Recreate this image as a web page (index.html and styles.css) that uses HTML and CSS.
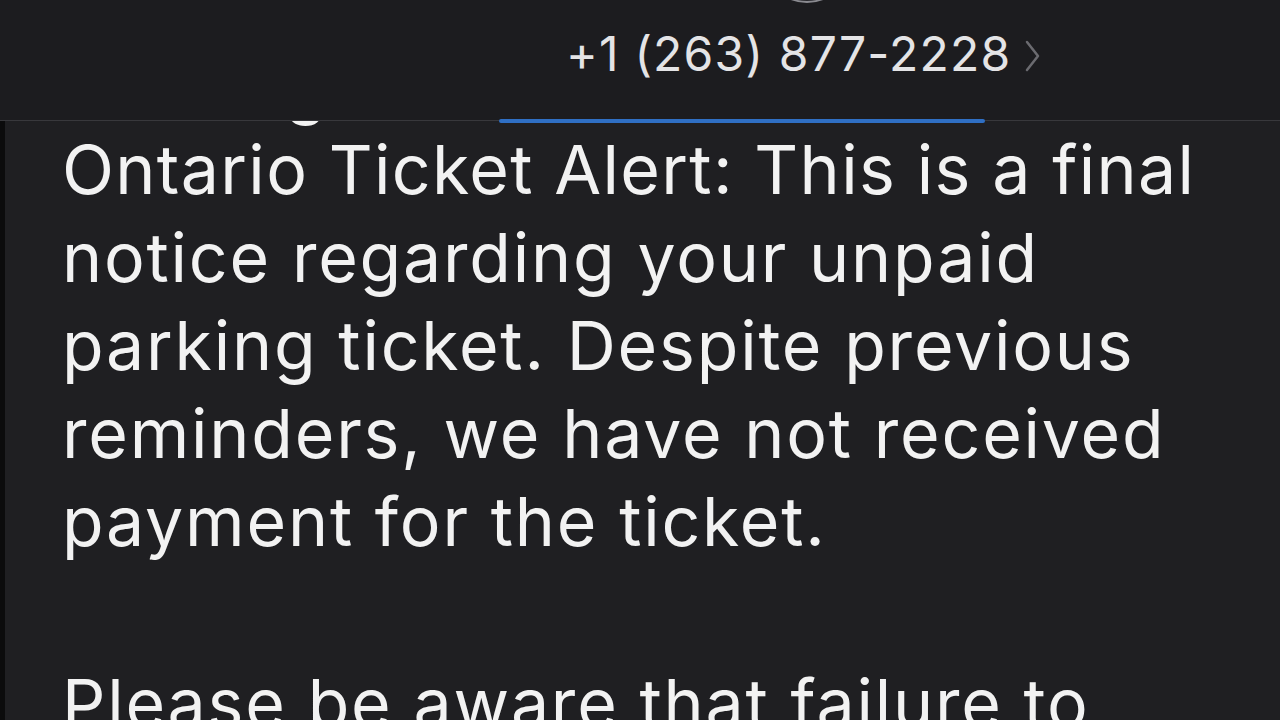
FILE: index.html
```html
<!DOCTYPE html>
<html lang="en">
<head>
    <meta charset="UTF-8">
    <title>Message</title>
    <link rel="stylesheet" href="styles.css">
</head>
<body>

    <!-- Conversation header -->
    <header class="header">
        <div class="avatar"></div>
        <div class="contact">
            <span class="number">+1 (263) 877-2228</span>
            <svg class="chevron" width="16" height="34" viewBox="0 0 16 34">
                <path d="M2 3 L13 17 L2 31" fill="none" stroke="#6b6b70" stroke-width="2.5" stroke-linecap="round" stroke-linejoin="round"/>
            </svg>
        </div>
        <div class="progress"></div>
    </header>

    <!-- Message body -->
    <main class="thread">
        <div class="cut-line">g</div>
        <p class="message"><span class="lead">Ontario Ticket Alert: This is a final</span> notice regarding your unpaid parking ticket. Despite previous reminders, we have not received payment for the ticket.</p>
        <p class="message">Please be aware that failure to settle the fine may result in additional penalties.</p>
    </main>

</body>
</html>
```

FILE: styles.css
```css
/* Page */
body, html {
    margin: 0;
    height: 100%;
    overflow: hidden;
    background-color: #1f1f22;
    font-family: Inter, "Noto Sans", sans-serif;
    color: #f2f2f2;
}

/* Header bar */
.header {
    position: relative;
    z-index: 2;
    height: 121px;
    background-color: #1c1c1f;
    border-bottom: 1px solid #38383c;
    box-sizing: border-box;
    display: flex;
    align-items: flex-start;
    padding: 24px 0 0 566px;
}

.avatar {
    position: absolute;
    left: 762px;
    top: -87px;
    width: 90px;
    height: 90px;
    border-radius: 50%;
    background-color: #2a2a2e;
    border-bottom: 2px solid #8a8a90;
    box-sizing: border-box;
}

.contact {
    display: flex;
    align-items: center;
    gap: 14px;
}

.number {
    font-size: 48px;
    color: #e4e4e6;
    letter-spacing: 1.2px;
}

.chevron {
    margin-top: 4px;
}

/* Blue loading bar under the header */
.progress {
    position: absolute;
    left: 499px;
    bottom: -3px;
    width: 486px;
    height: 4px;
    border-radius: 2px;
    background-color: #2f6fc4;
}

/* Message text */
.thread {
    position: relative;
    z-index: 1;
    border-left: 5px solid #0b0b0c;
    height: 100%;
    padding: 0 0 0 57px;
}

/* tail of the previous line, mostly hidden under the header */
.cut-line {
    position: absolute;
    left: 280px;
    top: -76px;
    font-size: 68px;
    color: #f2f2f2;
}

.message {
    margin: 0 0 94px 0;
    font-size: 68px;
    line-height: 88px;
    letter-spacing: 1.8px;
    width: 1180px;
}

.message:first-of-type {
    padding-top: 4px;
}

.message .lead {
    letter-spacing: 1.35px;
}
```
